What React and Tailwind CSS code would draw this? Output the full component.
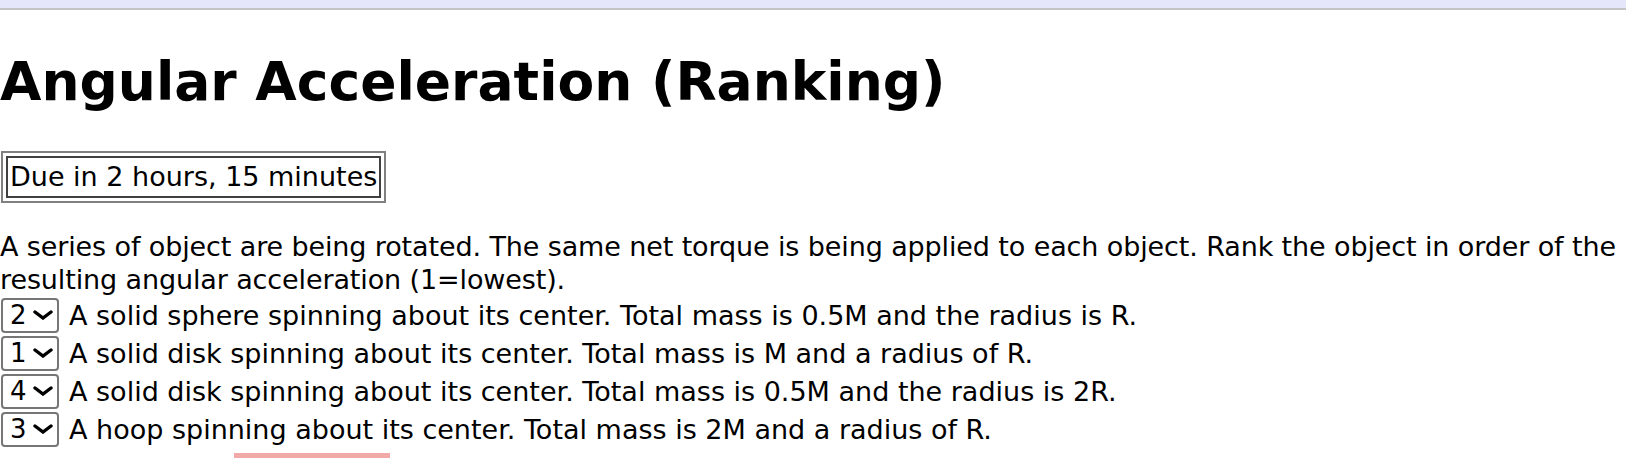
import React from 'react'

const items = [
    { rank: '2', text: 'A solid sphere spinning about its center. Total mass is 0.5M and the radius is R.' },
    { rank: '1', text: 'A solid disk spinning about its center. Total mass is M and a radius of R.' },
    { rank: '4', text: 'A solid disk spinning about its center. Total mass is 0.5M and the radius is 2R.' },
    { rank: '3', text: 'A hoop spinning about its center. Total mass is 2M and a radius of R.' },
]

function RankSelect({ value }) {
    return (
        <div className="relative ml-[1px] h-[35px] w-[58px] shrink-0">
            <select
                defaultValue={value}
                className="h-full w-full appearance-none rounded-[4px] border-2 border-[#767676] bg-white pl-[7px] text-[26px] leading-[31px]"
            >
                <option>1</option>
                <option>2</option>
                <option>3</option>
                <option>4</option>
            </select>
            <svg
                className="pointer-events-none absolute left-[32px] top-[12px]"
                width="20"
                height="10"
                viewBox="0 0 20 10"
                fill="none"
            >
                <polyline
                    points="2,2 10,8 18,2"
                    stroke="#000"
                    strokeWidth="3.4"
                    strokeLinecap="round"
                    strokeLinejoin="miter"
                />
            </svg>
        </div>
    )
}

export default function App() {
    return (
        <div className="h-[458px] overflow-hidden bg-white text-black font-['DejaVu_Sans',Verdana,sans-serif] text-[27px] leading-[33px]">
            <div className="h-[10px] border-b-2 border-[#c4c4c4] bg-[#e6e6fa]" />
            <h1 className="mt-[39px] text-[53.5px] font-bold leading-[66px]">
                Angular Acceleration (Ranking)
            </h1>
            <div className="mt-[36px] ml-[1px] inline-block border-2 border-[#808080] p-[3px]">
                <div className="border-2 border-[#404040] px-[2px] leading-[38px]">
                    Due in 2 hours, 15 minutes
                </div>
            </div>
            <p className="mt-[27px] tracking-[-0.12px]">
                A series of object are being rotated. The same net torque is being applied to each object. Rank the object in order of the resulting angular acceleration (1=lowest).
            </p>
            <div className="flex flex-col">
                {items.map((item, i) => (
                    <div key={i} className="flex h-[38px] items-center gap-[10px]">
                        <RankSelect value={item.rank} />
                        <span>{item.text}</span>
                    </div>
                ))}
            </div>
            <div className="ml-[234px] mt-[5px] h-[30px] w-[156px] bg-[#f2aaa8]" />
        </div>
    )
}
